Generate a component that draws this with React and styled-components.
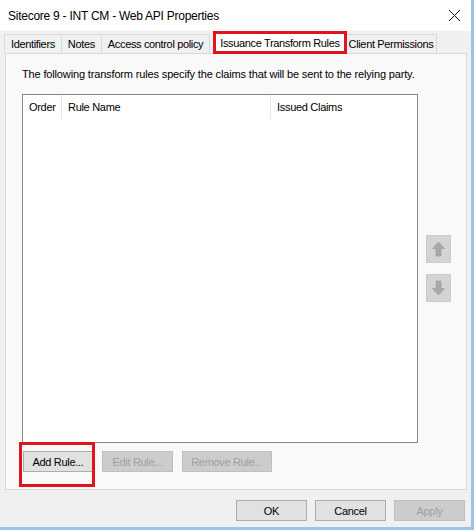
import React from 'react'
import styled, { createGlobalStyle } from 'styled-components'

const GlobalStyle = createGlobalStyle`
    html, body {
        margin: 0;
        padding: 0;
        background: #f0f0f0;
    }
    body {
        font-family: "Liberation Sans", Arial, sans-serif;
        font-size: 11px;
        color: #000;
    }
`

const Window = styled.div`
    width: 474px;
    height: 530px;
    box-sizing: border-box;
    background: #f0f0f0;
    border-right: 3px solid #9cc4ea;
    border-bottom: 3px solid #9cc4ea;
    display: flex;
    flex-direction: column;
`

const TitleBar = styled.div`
    height: 31px;
    flex-shrink: 0;
    background: #fff;
    display: flex;
    align-items: center;
    justify-content: space-between;
    padding: 0 8px 0 8px;
`

const Title = styled.div`
    font-size: 12px;
    letter-spacing: -0.25px;
    color: #000;
`

const CloseIcon = styled.svg`
    width: 13px;
    height: 13px;
    margin-right: 2px;
`

const Body = styled.div`
    flex: 1;
    display: flex;
    flex-direction: column;
    padding: 0 4px 0 5px;
`

const TabRow = styled.div`
    display: flex;
    align-items: flex-end;
    height: 22px;
    position: relative;
    z-index: 1;
`

const Tab = styled.div`
    box-sizing: border-box;
    height: ${props => props.$active ? '22px' : '19px'};
    padding: 0 ${props => props.$pad}px;
    display: flex;
    align-items: center;
    background: ${props => props.$active ? '#fff' : '#f0f0f0'};
    border: 1px solid #d9d9d9;
    border-bottom: none;
    margin-left: -1px;
    margin-bottom: ${props => props.$active ? '-1px' : '0'};
    white-space: nowrap;
    letter-spacing: -0.35px;
    ${props => props.$highlight && `
        border: 3px solid #e0141e;
        margin: 0 -1px -1px 3px;
        height: 23px;
        position: relative;
        z-index: 2;
    `}
`

const Panel = styled.div`
    box-sizing: border-box;
    height: 437px;
    background: #f9f9f9;
    border: 1px solid #d9d9d9;
    padding: 13px 17px 0 16px;
    display: flex;
    flex-direction: column;
`

const Description = styled.div`
    letter-spacing: -0.15px;
    height: 14px;
    line-height: 14px;
    margin-bottom: 13px;
`

const ListArea = styled.div`
    display: flex;
    align-items: center;
    gap: 8px;
`

const ListView = styled.div`
    box-sizing: border-box;
    width: 396px;
    height: 349px;
    background: #fff;
    border: 1px solid #828790;
    flex-shrink: 0;
`

const HeaderRow = styled.div`
    display: flex;
    height: 24px;
`

const HeaderCell = styled.div`
    box-sizing: border-box;
    width: ${props => props.$width}px;
    padding-left: 6px;
    display: flex;
    align-items: center;
    letter-spacing: -0.3px;
    border-right: ${props => props.$last ? 'none' : '1px solid #e5e5e5'};
`

const SideButtons = styled.div`
    display: flex;
    flex-direction: column;
    gap: 11px;
`

const ArrowButton = styled.div`
    box-sizing: border-box;
    width: 25px;
    height: 28px;
    background: #d4d4d4;
    border: 1px solid #cbcbcb;
    display: flex;
    align-items: center;
    justify-content: center;
`

const ActionRow = styled.div`
    display: flex;
    gap: 9px;
    margin-top: 8px;
    padding-left: 1px;
`

const Button = styled.div`
    box-sizing: border-box;
    width: ${props => props.$width}px;
    height: 21px;
    display: flex;
    align-items: center;
    justify-content: center;
    letter-spacing: -0.3px;
    background: ${props => props.$disabled ? '#cccccc' : '#e1e1e1'};
    border: 1px solid ${props => props.$disabled ? '#bfbfbf' : '#adadad'};
    color: ${props => props.$disabled ? '#a0a0a0' : '#000'};
`

const Marked = styled.div`
    position: relative;
`

const Annotation = styled.div`
    position: absolute;
    left: -4px;
    top: -9px;
    width: 76px;
    height: 45px;
    box-sizing: border-box;
    border: 3px solid #e0141e;
    pointer-events: none;
`

const Footer = styled.div`
    display: flex;
    justify-content: flex-end;
    gap: 8px;
    padding: 10px 2px 0 0;
`

function UpArrow() {
    return (
        <svg width="13" height="16" viewBox="0 0 13 16">
            <path d="M6.5 1 L12.5 7.5 L9 7.5 L9 15 L4 15 L4 7.5 L0.5 7.5 Z" fill="#a9a9a9" stroke="#9a9a9a" strokeWidth="0.6" />
        </svg>
    )
}

function DownArrow() {
    return (
        <svg width="13" height="16" viewBox="0 0 13 16">
            <path d="M6.5 15 L12.5 8.5 L9 8.5 L9 1 L4 1 L4 8.5 L0.5 8.5 Z" fill="#a9a9a9" stroke="#9a9a9a" strokeWidth="0.6" />
        </svg>
    )
}

const tabs = [
    { label: 'Identifiers', pad: 6 },
    { label: 'Notes', pad: 6 },
    { label: 'Access control policy', pad: 6 },
    { label: 'Issuance Transform Rules', pad: 4, active: true },
    { label: 'Client Permissions', pad: 3 },
]

export default function App() {
    return (
        <>
            <GlobalStyle />
            <Window>
                <TitleBar>
                    <Title>Sitecore 9 - INT CM - Web API Properties</Title>
                    <CloseIcon viewBox="0 0 13 13">
                        <path d="M1 1 L12 12 M12 1 L1 12" stroke="#111" strokeWidth="1" />
                    </CloseIcon>
                </TitleBar>
                <Body>
                    <TabRow>
                        {tabs.map(tab => (
                            <Tab key={tab.label} $pad={tab.pad} $active={tab.active} $highlight={tab.active}>
                                {tab.label}
                            </Tab>
                        ))}
                    </TabRow>
                    <Panel>
                        <Description>
                            The following transform rules specify the claims that will be sent to the relying party.
                        </Description>
                        <ListArea>
                            <ListView>
                                <HeaderRow>
                                    <HeaderCell $width={39}>Order</HeaderCell>
                                    <HeaderCell $width={209}>Rule Name</HeaderCell>
                                    <HeaderCell $width={140} $last>Issued Claims</HeaderCell>
                                </HeaderRow>
                            </ListView>
                            <SideButtons>
                                <ArrowButton><UpArrow /></ArrowButton>
                                <ArrowButton><DownArrow /></ArrowButton>
                            </SideButtons>
                        </ListArea>
                        <ActionRow>
                            <Marked>
                                <Button $width={70}>Add Rule...</Button>
                                <Annotation />
                            </Marked>
                            <Button $width={71} $disabled>Edit Rule...</Button>
                            <Button $width={90} $disabled>Remove Rule...</Button>
                        </ActionRow>
                    </Panel>
                    <Footer>
                        <Button $width={71}>OK</Button>
                        <Button $width={71}>Cancel</Button>
                        <Button $width={71} $disabled>Apply</Button>
                    </Footer>
                </Body>
            </Window>
        </>
    )
}
